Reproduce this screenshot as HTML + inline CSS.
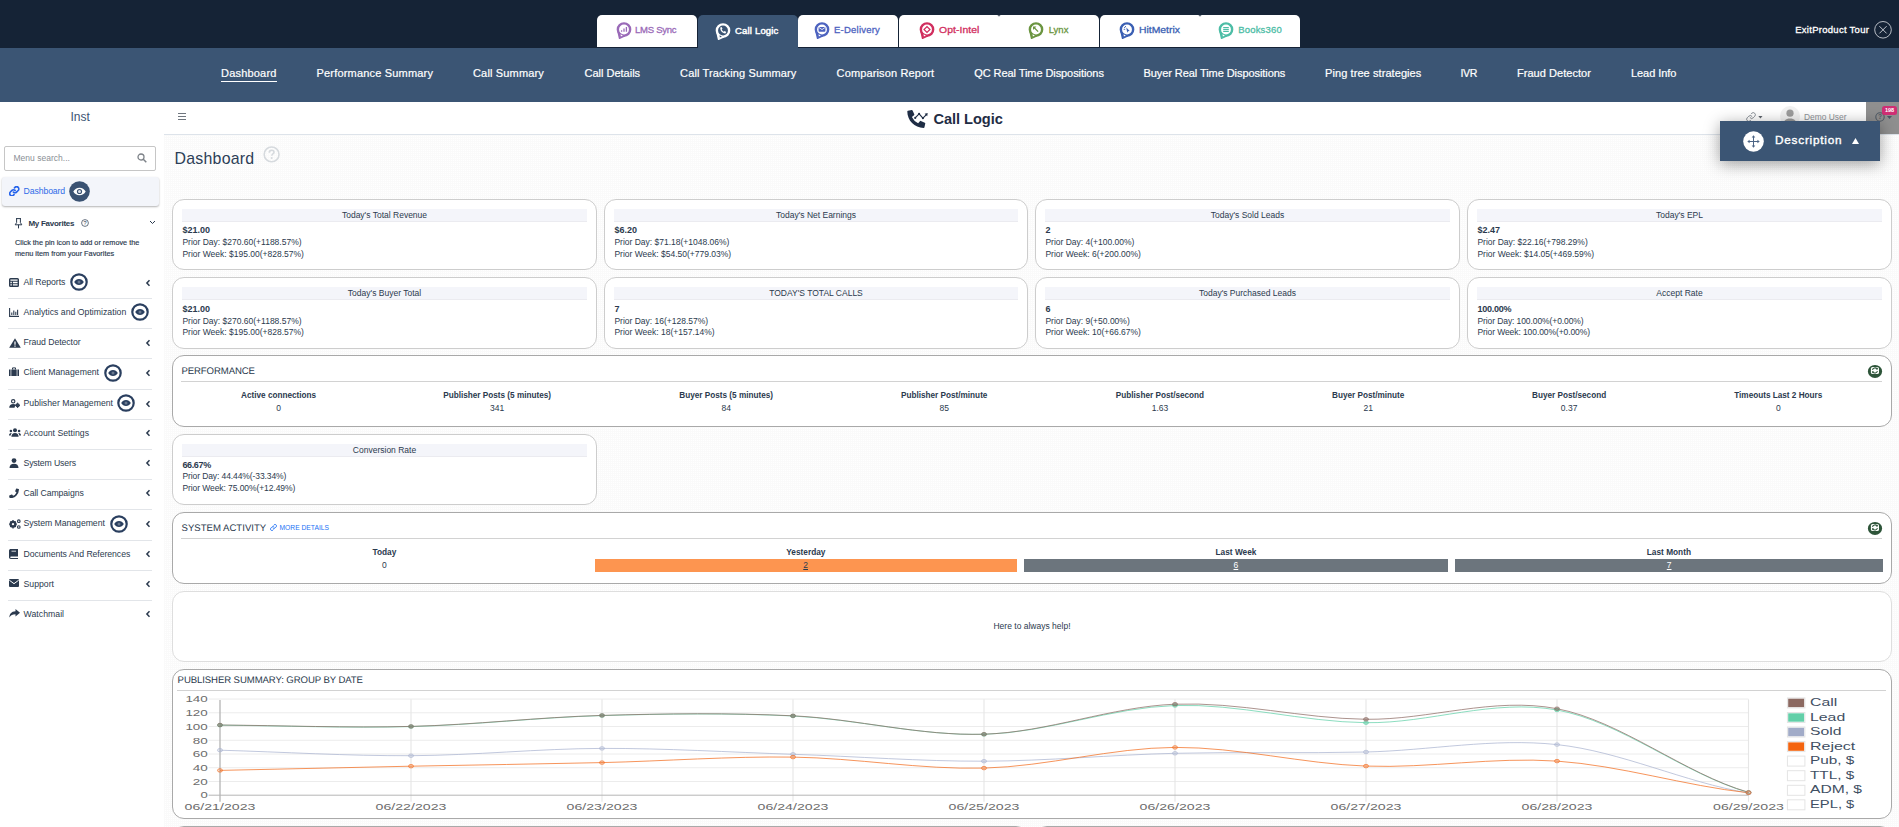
<!DOCTYPE html>
<html lang="en">
<head>
<meta charset="utf-8">
<title>Call Logic - Dashboard</title>
<style>
*{box-sizing:border-box;margin:0;padding:0}
html,body{width:1899px;height:827px;overflow:hidden;background-color:#fff;background-image:linear-gradient(90deg,#fafafa 1px,transparent 1px),linear-gradient(transparent 1px,#fafafa 1px);background-size:2px 2px;font-family:"Liberation Sans",sans-serif;color:#2b3a4e}
.abs{position:absolute}
.abs svg,svg.abs{display:block}
.t{position:absolute;white-space:nowrap;line-height:1}
.card{position:absolute;background:#fff;border:1px solid #cdcdcd;border-radius:12px}
#top{position:absolute;left:0;top:0;width:1899px;height:48px;background:#152336}
#nav{position:absolute;left:0;top:48px;width:1899px;height:54px;background:#3b5574}
</style>
</head>
<body>
<div id="top"></div>
<div id="nav"></div>
<!-- top bar -->
<div class="abs" style="left:597px;top:15px;width:100.3px;height:32px;background:#fff;border-radius:5px 5px 0 0"></div>
<div class="abs" style="left:613.5px;top:21.0px"><svg width="20" height="22" viewBox="0 0 20 22"><path d="M4.200 11.500L5.500 17.300 10.800 14.800z" fill="#9a6ab8" stroke="#9a6ab8" stroke-width="1.400" stroke-linejoin="round"/><circle cx="10" cy="8.500" r="6.150" fill="#fff" stroke="#9a6ab8" stroke-width="2.400"/><path d="M6.500 13.200L6.900 15.500 8.900 14.400z" fill="#fff"/><path d="M7.600 10.800V9.300M10 10.800V7.600M12.400 10.800V6" stroke="#9a6ab8" stroke-width="1.300" fill="none"/></svg></div>
<div class="t" style="font-size:9.5px;color:#9a6ab8;top:25.00px;-webkit-text-stroke:0.3px;left:635.00px;letter-spacing:-0.250px;">LMS Sync</div>
<div class="abs" style="left:697.5px;top:15px;width:100.2px;height:33px;background:#3b5574;border-radius:5px 5px 0 0"></div>
<div class="abs" style="left:713.4px;top:21.5px"><svg width="20" height="22" viewBox="0 0 20 22"><path d="M4.200 11.500L5.500 17.300 10.800 14.800z" fill="#ffffff" stroke="#ffffff" stroke-width="1.400" stroke-linejoin="round"/><circle cx="10" cy="8.500" r="6.150" fill="#3b5574" stroke="#ffffff" stroke-width="2.400"/><path d="M6.500 13.200L6.900 15.500 8.900 14.400z" fill="#3b5574"/><path d="M7.300 5.500c-.3 3 1.900 5.700 5 6l1-1.400-1.700-1.100-.8.700c-1-.5-1.700-1.300-2.100-2.300l.8-.6-.9-1.800z" fill="#fff"/></svg></div>
<div class="t" style="font-size:9.5px;color:#ffffff;top:26.00px;-webkit-text-stroke:0.45px;left:735.10px;letter-spacing:0.168px;">Call Logic</div>
<div class="abs" style="left:797.7px;top:15px;width:100.3px;height:32px;background:#fff;border-radius:5px 5px 0 0"></div>
<div class="abs" style="left:812.4px;top:21.2px"><svg width="20" height="22" viewBox="0 0 20 22"><path d="M4.200 11.500L5.500 17.300 10.800 14.800z" fill="#4d63bf" stroke="#4d63bf" stroke-width="1.400" stroke-linejoin="round"/><circle cx="10" cy="8.500" r="6.150" fill="#fff" stroke="#4d63bf" stroke-width="2.400"/><path d="M6.500 13.200L6.900 15.500 8.900 14.400z" fill="#fff"/><rect x="6.600" y="6" width="6.800" height="4.800" rx=".8" fill="#4d63bf"/><path d="M7 6.500l3 2.100 3-2.100" stroke="#fff" stroke-width=".8" fill="none"/></svg></div>
<div class="t" style="font-size:9.5px;color:#4d63bf;top:25.00px;-webkit-text-stroke:0.3px;left:834.00px;letter-spacing:0.229px;">E-Delivery</div>
<div class="abs" style="left:898.9px;top:15px;width:100.3px;height:32px;background:#fff;border-radius:5px 2px 0 0"></div>
<div class="abs" style="left:916.5px;top:21.2px"><svg width="20" height="22" viewBox="0 0 20 22"><path d="M4.200 11.500L5.500 17.300 10.800 14.800z" fill="#d12e5e" stroke="#d12e5e" stroke-width="1.400" stroke-linejoin="round"/><circle cx="10" cy="8.500" r="6.150" fill="#fff" stroke="#d12e5e" stroke-width="2.400"/><path d="M6.500 13.200L6.900 15.500 8.900 14.400z" fill="#fff"/><rect x="7.900" y="6.400" width="4.200" height="4.200" transform="rotate(45 10 8.500)" fill="none" stroke="#d12e5e" stroke-width="1.200"/></svg></div>
<div class="t" style="font-size:9.5px;color:#d12e5e;top:25.00px;-webkit-text-stroke:0.3px;left:938.50px;transform:scaleX(1.0900);transform-origin:0 0;letter-spacing:0.080px;">Opt-Intel</div>
<div class="abs" style="left:999px;top:15px;width:100px;height:32px;background:#fff;border-radius:2px 5px 0 0"></div>
<div class="abs" style="left:1026.3px;top:21.2px"><svg width="20" height="22" viewBox="0 0 20 22"><path d="M4.200 11.500L5.500 17.300 10.800 14.800z" fill="#6b9541" stroke="#6b9541" stroke-width="1.400" stroke-linejoin="round"/><circle cx="10" cy="8.500" r="6.150" fill="#fff" stroke="#6b9541" stroke-width="2.400"/><path d="M6.500 13.200L6.900 15.500 8.900 14.400z" fill="#fff"/><path d="M7.800 6.300l4.300 4.300" stroke="#6b9541" stroke-width="1.300" fill="none"/><path d="M7 5.500h3.400L7 8.900z" fill="#6b9541"/></svg></div>
<div class="t" style="font-size:9.5px;color:#6b9541;top:25.00px;-webkit-text-stroke:0.3px;left:1048.70px;letter-spacing:-0.005px;">Lynx</div>
<div class="abs" style="left:1100px;top:15px;width:100px;height:32px;background:#fff;border-radius:5px 2px 0 0"></div>
<div class="abs" style="left:1117.3px;top:21.2px"><svg width="20" height="22" viewBox="0 0 20 22"><path d="M4.200 11.500L5.500 17.300 10.800 14.800z" fill="#3a5fb3" stroke="#3a5fb3" stroke-width="1.400" stroke-linejoin="round"/><circle cx="10" cy="8.500" r="6.150" fill="#fff" stroke="#3a5fb3" stroke-width="2.400"/><path d="M6.500 13.200L6.900 15.500 8.900 14.400z" fill="#fff"/><path d="M9.300 6.400l3.400 3.700-1.700.1-.8 1.500z" fill="#3a5fb3"/><path d="M6.700 8.300h1.500M8.500 5v1.200M7 6l.9.900" stroke="#3a5fb3" stroke-width=".9"/></svg></div>
<div class="t" style="font-size:9.5px;color:#3a5fb3;top:25.00px;-webkit-text-stroke:0.3px;left:1139.00px;transform:scaleX(1.0900);transform-origin:0 0;letter-spacing:0.014px;">HitMetrix</div>
<div class="abs" style="left:1200px;top:15px;width:100.1px;height:32px;background:#fff;border-radius:2px 5px 0 0"></div>
<div class="abs" style="left:1216.3px;top:21.2px"><svg width="20" height="22" viewBox="0 0 20 22"><path d="M4.200 11.500L5.500 17.300 10.800 14.800z" fill="#4dbda6" stroke="#4dbda6" stroke-width="1.400" stroke-linejoin="round"/><circle cx="10" cy="8.500" r="6.150" fill="#fff" stroke="#4dbda6" stroke-width="2.400"/><path d="M6.500 13.200L6.900 15.500 8.900 14.400z" fill="#fff"/><path d="M7.200 6.700h5.600M7.200 8.500h5.600M7.200 10.300h5.600" stroke="#4dbda6" stroke-width="1.200" fill="none"/></svg></div>
<div class="t" style="font-size:9.5px;color:#4dbda6;top:25.00px;-webkit-text-stroke:0.3px;left:1238.20px;letter-spacing:0.179px;">Books360</div>
<div class="t" style="font-size:9.5px;color:#fff;top:25.00px;-webkit-text-stroke:0.3px;left:1795.20px;letter-spacing:0.279px;">ExitProduct Tour</div>
<svg class="abs" style="left:1873px;top:20px" width="20" height="20" viewBox="0 0 20 20"><circle cx="10" cy="9.800" r="8.300" fill="none" stroke="#d3d7dd" stroke-width=".85"/><path d="M6.400 6.200l7.200 7.200M13.600 6.200l-7.200 7.200" stroke="#d3d7dd" stroke-width=".9"/></svg>
<!-- nav -->
<div class="t" style="font-size:11px;color:#fff;top:68.00px;-webkit-text-stroke:0.2px;left:221.00px;letter-spacing:0.197px;">Dashboard</div>
<div class="t" style="font-size:11px;color:#fff;top:68.00px;-webkit-text-stroke:0.2px;left:316.50px;letter-spacing:0.185px;">Performance Summary</div>
<div class="t" style="font-size:11px;color:#fff;top:68.00px;-webkit-text-stroke:0.2px;left:473.00px;letter-spacing:0.160px;">Call Summary</div>
<div class="t" style="font-size:11px;color:#fff;top:68.00px;-webkit-text-stroke:0.2px;left:584.50px;letter-spacing:-0.003px;">Call Details</div>
<div class="t" style="font-size:11px;color:#fff;top:68.00px;-webkit-text-stroke:0.2px;left:680.10px;letter-spacing:0.124px;">Call Tracking Summary</div>
<div class="t" style="font-size:11px;color:#fff;top:68.00px;-webkit-text-stroke:0.2px;left:836.60px;letter-spacing:0.131px;">Comparison Report</div>
<div class="t" style="font-size:11px;color:#fff;top:68.00px;-webkit-text-stroke:0.2px;left:974.30px;letter-spacing:-0.077px;">QC Real Time Dispositions</div>
<div class="t" style="font-size:11px;color:#fff;top:68.00px;-webkit-text-stroke:0.2px;left:1143.50px;letter-spacing:-0.070px;">Buyer Real Time Dispositions</div>
<div class="t" style="font-size:11px;color:#fff;top:68.00px;-webkit-text-stroke:0.2px;left:1325.10px;letter-spacing:0.076px;">Ping tree strategies</div>
<div class="t" style="font-size:10.6px;color:#fff;top:68.00px;-webkit-text-stroke:0.2px;left:1460.50px;letter-spacing:-0.357px;">IVR</div>
<div class="t" style="font-size:11px;color:#fff;top:68.00px;-webkit-text-stroke:0.2px;left:1516.90px;letter-spacing:0.052px;">Fraud Detector</div>
<div class="t" style="font-size:11px;color:#fff;top:68.00px;-webkit-text-stroke:0.2px;left:1631.00px;letter-spacing:-0.064px;">Lead Info</div>
<div class="abs" style="left:221px;top:80.700px;width:55.600px;height:1px;background:#fff"></div>
<!-- sidebar -->
<div class="abs" style="left:0;top:102px;width:164px;height:725px;background:#fff"></div>
<div class="t" style="font-size:12px;color:#3b5373;top:111.00px;left:70.50px;letter-spacing:0.039px;">Inst</div>
<div class="abs" style="left:4px;top:146px;width:152px;height:25px;border:1px solid #c6c6c6;border-radius:2px;background:#fff"></div>
<div class="t" style="font-size:8.5px;color:#8a8f96;top:154.00px;left:13.50px;letter-spacing:0.019px;">Menu search...</div>
<svg class="abs" style="left:137px;top:153px" width="10" height="10" viewBox="0 0 10 10"><circle cx="4" cy="4" r="3" fill="none" stroke="#7d8288" stroke-width="1.300"/><path d="M6.300 6.300l3 3" stroke="#7d8288" stroke-width="1.500"/></svg>
<div class="abs" style="left:1.600px;top:177px;width:157.700px;height:28.800px;background:#f3f5fa;border-radius:3px;box-shadow:0 1px 2px rgba(0,0,0,.3)"></div>
<svg class="abs" style="left:9px;top:185.800px" width="10.500" height="10.500" viewBox="0 0 11 11"><path d="M4.600 6.400a2.300 2.300 0 0 0 3.300 0l1.700-1.700a2.300 2.300 0 0 0-3.300-3.300l-.6.600M6.400 4.600a2.300 2.300 0 0 0-3.300 0L1.400 6.300a2.300 2.300 0 0 0 3.300 3.300l.6-.6" fill="none" stroke="#2563eb" stroke-width="1.7" stroke-linecap="round"/></svg>
<div class="t" style="font-size:8.7px;color:#2f6be8;top:187.00px;left:23.60px;letter-spacing:-0.113px;">Dashboard</div>
<div class="abs" style="left:68.600px;top:180.900px"><svg width="21" height="21" viewBox="0 0 21 21"><circle cx="10.500" cy="10.500" r="10.300" fill="#3a5272"/><path d="M4.300 10.500c1.400-2.500 3.500-3.800 6.200-3.800s4.800 1.300 6.200 3.800c-1.400 2.500-3.500 3.800-6.200 3.800s-4.800-1.300-6.200-3.800z" fill="#fff"/><circle cx="10.500" cy="10.500" r="2.600" fill="#3a5272"/><circle cx="10.500" cy="10.500" r="1.500" fill="#dfe4ec"/></svg></div>
<svg class="abs" style="left:13.800px;top:217.500px" width="9" height="11" viewBox="0 0 9 11"><path d="M2 .6h5M2.600.6v4L1.200 6.800h6.600L6.400 4.600v-4M4.500 6.800v3.600" fill="none" stroke="#2b3a4e" stroke-width="1"/></svg>
<div class="t" style="font-size:8px;color:#2b3a4e;top:220.00px;font-weight:bold;left:28.40px;letter-spacing:-0.259px;">My Favorites</div>
<svg class="abs" style="left:81px;top:218.500px" width="8" height="8" viewBox="0 0 8 8"><circle cx="4" cy="4" r="3.400" fill="none" stroke="#2b3a4e" stroke-width=".7"/><text x="4" y="6" font-size="5.500" text-anchor="middle" fill="#2b3a4e" font-family="Liberation Sans">?</text></svg>
<svg class="abs" style="left:149px;top:220px" width="7" height="5" viewBox="0 0 7 5"><path d="M1 1l2.500 2.500L6 1" fill="none" stroke="#2b3a4e" stroke-width="1"/></svg>
<div class="t" style="font-size:6.8px;color:#2b3a4e;top:240.00px;-webkit-text-stroke:0.15px;left:14.80px;transform:scaleX(1.0716);transform-origin:0 0;letter-spacing:-0.000px;">Click the pin icon to add or remove the</div>
<div class="t" style="font-size:6.8px;color:#2b3a4e;top:251.00px;-webkit-text-stroke:0.15px;left:14.80px;transform:scaleX(1.0763);transform-origin:0 0;letter-spacing:0.000px;">menu item from your Favorites</div>
<div class="abs" style="left:8.500px;top:277.5px"><svg width="10" height="9" viewBox="0 0 10 9"><rect x=".7" y=".7" width="8.600" height="7.600" rx=".8" fill="none" stroke="#2b3a4e" stroke-width="1.400"/><path d="M1 3.200h8M1 5.700h8M3.400 3v5.400" stroke="#2b3a4e" stroke-width="1.100"/></svg></div>
<div class="t" style="font-size:8.7px;color:#2b3a4e;top:278.00px;left:23.50px;letter-spacing:-0.064px;">All Reports</div>
<svg class="abs" style="left:144.500px;top:279.3px" width="6" height="8" viewBox="0 0 6 8"><path d="M4.500 1.300L1.900 4l2.600 2.700" fill="none" stroke="#2b3a4e" stroke-width="1.500"/></svg>
<div class="abs" style="left:70.0px;top:273.2px"><svg width="18" height="18" viewBox="0 0 18 18"><circle cx="9" cy="9" r="7.700" fill="#fff" stroke="#2a3f5f" stroke-width="2.200"/><path d="M4.200 9c1.100-1.900 2.700-2.900 4.800-2.900s3.700 1 4.800 2.900c-1.100 1.900-2.700 2.900-4.800 2.900s-3.700-1-4.800-2.900z" fill="#2a3f5f"/><circle cx="9" cy="9" r="1.500" fill="#fff" opacity=".3"/></svg></div>
<div class="abs" style="left:8px;top:298.0px;width:144px;height:1px;background:#e2e5e9"></div>
<div class="abs" style="left:8.500px;top:307.5px"><svg width="10" height="9" viewBox="0 0 10 9"><path d="M.6 0v8.400h9.400" fill="none" stroke="#2b3a4e" stroke-width="1.100"/><path d="M2.800 7V4.500M4.800 7V2.500M6.800 7V3.800M8.600 7V1.800" stroke="#2b3a4e" stroke-width="1.100"/></svg></div>
<div class="t" style="font-size:8.7px;color:#2b3a4e;top:308.00px;left:23.50px;letter-spacing:0.016px;">Analytics and Optimization</div>
<div class="abs" style="left:131.0px;top:303.2px"><svg width="18" height="18" viewBox="0 0 18 18"><circle cx="9" cy="9" r="7.700" fill="#fff" stroke="#2a3f5f" stroke-width="2.200"/><path d="M4.200 9c1.100-1.900 2.700-2.900 4.800-2.900s3.700 1 4.800 2.900c-1.100 1.900-2.700 2.900-4.800 2.900s-3.700-1-4.800-2.900z" fill="#2a3f5f"/><circle cx="9" cy="9" r="1.500" fill="#fff" opacity=".3"/></svg></div>
<div class="abs" style="left:8px;top:327.8px;width:144px;height:1px;background:#e2e5e9"></div>
<div class="abs" style="left:8.500px;top:337.6px"><svg width="12" height="10" viewBox="0 0 12 10"><path d="M6 .2L11.800 9.800H.2z" fill="#2b3a4e"/><path d="M6 3.500v3.200M6 7.600v1.100" stroke="#fff" stroke-width="1.200"/></svg></div>
<div class="t" style="font-size:8.7px;color:#2b3a4e;top:338.00px;left:23.50px;letter-spacing:-0.068px;">Fraud Detector</div>
<svg class="abs" style="left:144.500px;top:338.6px" width="6" height="8" viewBox="0 0 6 8"><path d="M4.500 1.300L1.900 4l2.600 2.700" fill="none" stroke="#2b3a4e" stroke-width="1.500"/></svg>
<div class="abs" style="left:8px;top:357.9px;width:144px;height:1px;background:#e2e5e9"></div>
<div class="abs" style="left:8.500px;top:367.4px"><svg width="10" height="9" viewBox="0 0 10 9"><path d="M0 2.500h1.600v6.500H0zM8.400 2.500H10v6.500H8.400zM2.300 2.500h5.400v6.500H2.300z" fill="#2b3a4e"/><path d="M3.500 2.500V.9h3v1.600" fill="none" stroke="#2b3a4e" stroke-width="1"/></svg></div>
<div class="t" style="font-size:8.7px;color:#2b3a4e;top:368.00px;left:23.50px;letter-spacing:0.009px;">Client Management</div>
<svg class="abs" style="left:144.500px;top:369.2px" width="6" height="8" viewBox="0 0 6 8"><path d="M4.500 1.300L1.900 4l2.600 2.700" fill="none" stroke="#2b3a4e" stroke-width="1.500"/></svg>
<div class="abs" style="left:103.5px;top:363.5px"><svg width="18" height="18" viewBox="0 0 18 18"><circle cx="9" cy="9" r="7.700" fill="#fff" stroke="#2a3f5f" stroke-width="2.200"/><path d="M4.200 9c1.100-1.900 2.700-2.900 4.800-2.900s3.700 1 4.800 2.900c-1.100 1.900-2.700 2.900-4.800 2.900s-3.700-1-4.800-2.900z" fill="#2a3f5f"/><circle cx="9" cy="9" r="1.500" fill="#fff" opacity=".3"/></svg></div>
<div class="abs" style="left:8px;top:389.0px;width:144px;height:1px;background:#e2e5e9"></div>
<div class="abs" style="left:8.500px;top:398.5px"><svg width="11" height="9" viewBox="0 0 11 9"><circle cx="4.200" cy="2.300" r="1.700" fill="none" stroke="#2b3a4e" stroke-width="1.100"/><path d="M.2 8.800c0-2.500 1.500-3.900 4-3.900 1 0 1.800.2 2.400.7L5.500 8.800z" fill="#2b3a4e"/><circle cx="8.600" cy="6.300" r="2.100" fill="#2b3a4e"/><circle cx="8.600" cy="6.300" r=".8" fill="#fff"/><path d="M8.600 3.600v5.400M5.900 6.300h5.400" stroke="#2b3a4e" stroke-width=".9"/></svg></div>
<div class="t" style="font-size:8.7px;color:#2b3a4e;top:399.00px;left:23.50px;letter-spacing:0.008px;">Publisher Management</div>
<svg class="abs" style="left:144.500px;top:400.3px" width="6" height="8" viewBox="0 0 6 8"><path d="M4.500 1.300L1.900 4l2.600 2.700" fill="none" stroke="#2b3a4e" stroke-width="1.500"/></svg>
<div class="abs" style="left:117.0px;top:394.0px"><svg width="18" height="18" viewBox="0 0 18 18"><circle cx="9" cy="9" r="7.700" fill="#fff" stroke="#2a3f5f" stroke-width="2.200"/><path d="M4.200 9c1.100-1.900 2.700-2.900 4.800-2.900s3.700 1 4.800 2.900c-1.100 1.900-2.700 2.900-4.800 2.900s-3.700-1-4.800-2.900z" fill="#2a3f5f"/><circle cx="9" cy="9" r="1.500" fill="#fff" opacity=".3"/></svg></div>
<div class="abs" style="left:8px;top:418.8px;width:144px;height:1px;background:#e2e5e9"></div>
<div class="abs" style="left:8.500px;top:428.3px"><svg width="12" height="9" viewBox="0 0 12 9"><circle cx="6" cy="2.300" r="2" fill="#2b3a4e"/><path d="M2.400 8.800c0-2.300 1.400-3.700 3.600-3.700s3.600 1.400 3.600 3.700z" fill="#2b3a4e"/><circle cx="1.900" cy="3" r="1.300" fill="#2b3a4e"/><circle cx="10.100" cy="3" r="1.300" fill="#2b3a4e"/><path d="M0 7.600c0-1.600.8-2.600 2.200-2.600l.5.100c-.6.700-.9 1.500-1 2.500zM12 7.600c0-1.600-.8-2.600-2.200-2.600l-.5.100c.6.700.9 1.500 1 2.500z" fill="#2b3a4e"/></svg></div>
<div class="t" style="font-size:8.7px;color:#2b3a4e;top:429.00px;left:23.50px;letter-spacing:0.019px;">Account Settings</div>
<svg class="abs" style="left:144.500px;top:429.3px" width="6" height="8" viewBox="0 0 6 8"><path d="M4.500 1.300L1.900 4l2.600 2.700" fill="none" stroke="#2b3a4e" stroke-width="1.500"/></svg>
<div class="abs" style="left:8px;top:449.1px;width:144px;height:1px;background:#e2e5e9"></div>
<div class="abs" style="left:8.500px;top:458.3px"><svg width="10" height="10" viewBox="0 0 10 10"><circle cx="5" cy="2.600" r="2.400" fill="#2b3a4e"/><path d="M.5 10c0-2.700 1.700-4.200 4.500-4.200s4.500 1.500 4.500 4.200z" fill="#2b3a4e"/></svg></div>
<div class="t" style="font-size:8.7px;color:#2b3a4e;top:459.00px;left:23.50px;letter-spacing:-0.132px;">System Users</div>
<svg class="abs" style="left:144.500px;top:459.3px" width="6" height="8" viewBox="0 0 6 8"><path d="M4.500 1.300L1.900 4l2.600 2.700" fill="none" stroke="#2b3a4e" stroke-width="1.500"/></svg>
<div class="abs" style="left:8px;top:479.0px;width:144px;height:1px;background:#e2e5e9"></div>
<div class="abs" style="left:8.500px;top:488.3px"><svg width="10" height="10" viewBox="0 0 10 10"><path d="M.4.900l2-.5a.5.500 0 0 1 .5.300l.9 2.200a.5.500 0 0 1-.1.500l-1.200 1a7.200 7.200 0 0 0 3.400 3.400l1-1.200a.5.500 0 0 1 .5-.1l2.200.9a.5.500 0 0 1 .3.500l-.5 2a.5.500 0 0 1-.5.400A9.100 9.100 0 0 1 0 1.400a.5.500 0 0 1 .4-.5z" fill="#2b3a4e" transform="translate(10,0) scale(-1,1)"/></svg></div>
<div class="t" style="font-size:8.7px;color:#2b3a4e;top:489.00px;left:23.50px;letter-spacing:-0.081px;">Call Campaigns</div>
<svg class="abs" style="left:144.500px;top:489.3px" width="6" height="8" viewBox="0 0 6 8"><path d="M4.500 1.300L1.900 4l2.600 2.700" fill="none" stroke="#2b3a4e" stroke-width="1.500"/></svg>
<div class="abs" style="left:8px;top:509.0px;width:144px;height:1px;background:#e2e5e9"></div>
<div class="abs" style="left:8.500px;top:518.6px"><svg width="12" height="10" viewBox="0 0 12 10"><circle cx="4" cy="5.200" r="2.500" fill="none" stroke="#2b3a4e" stroke-width="2"/><path d="M4 1v8.400M.2 5.200h7.600M1.300 2.500l5.400 5.400M6.700 2.500L1.300 7.900" stroke="#2b3a4e" stroke-width="1.300"/><circle cx="4" cy="5.200" r="1.100" fill="#fff"/><circle cx="9.800" cy="2.200" r="1.300" fill="none" stroke="#2b3a4e" stroke-width="1.100"/><circle cx="9.800" cy="8" r="1.300" fill="none" stroke="#2b3a4e" stroke-width="1.100"/></svg></div>
<div class="t" style="font-size:8.7px;color:#2b3a4e;top:519.00px;left:23.50px;letter-spacing:-0.047px;">System Management</div>
<svg class="abs" style="left:144.500px;top:520.4px" width="6" height="8" viewBox="0 0 6 8"><path d="M4.500 1.300L1.900 4l2.600 2.700" fill="none" stroke="#2b3a4e" stroke-width="1.500"/></svg>
<div class="abs" style="left:109.6px;top:515.0px"><svg width="18" height="18" viewBox="0 0 18 18"><circle cx="9" cy="9" r="7.700" fill="#fff" stroke="#2a3f5f" stroke-width="2.200"/><path d="M4.200 9c1.100-1.900 2.700-2.900 4.800-2.900s3.700 1 4.800 2.900c-1.100 1.900-2.700 2.900-4.800 2.900s-3.700-1-4.800-2.900z" fill="#2a3f5f"/><circle cx="9" cy="9" r="1.500" fill="#fff" opacity=".3"/></svg></div>
<div class="abs" style="left:8px;top:539.7px;width:144px;height:1px;background:#e2e5e9"></div>
<div class="abs" style="left:8.500px;top:549.3px"><svg width="9" height="10" viewBox="0 0 9 10"><path d="M1.800 0H9v7.600H2c-.5 0-.8.300-.8.700s.3.700.8.700h7V10H1.800C.8 10 0 9.300 0 8.300V1.700C0 .7.800 0 1.800 0z" fill="#2b3a4e"/><path d="M2.500 2.200h4.500" stroke="#fff" stroke-width=".8"/></svg></div>
<div class="t" style="font-size:8.7px;color:#2b3a4e;top:550.00px;left:23.50px;letter-spacing:-0.061px;">Documents And References</div>
<svg class="abs" style="left:144.500px;top:550.3px" width="6" height="8" viewBox="0 0 6 8"><path d="M4.500 1.300L1.900 4l2.600 2.700" fill="none" stroke="#2b3a4e" stroke-width="1.500"/></svg>
<div class="abs" style="left:8px;top:569.7px;width:144px;height:1px;background:#e2e5e9"></div>
<div class="abs" style="left:8.500px;top:579.3px"><svg width="10" height="8" viewBox="0 0 10 8"><rect width="10" height="8" rx="1" fill="#2b3a4e"/><path d="M.3 1.200l4.700 3.500 4.700-3.500" stroke="#fff" stroke-width="1" fill="none"/></svg></div>
<div class="t" style="font-size:8.7px;color:#2b3a4e;top:580.00px;left:23.50px;letter-spacing:0.009px;">Support</div>
<svg class="abs" style="left:144.500px;top:580.3px" width="6" height="8" viewBox="0 0 6 8"><path d="M4.500 1.300L1.900 4l2.600 2.700" fill="none" stroke="#2b3a4e" stroke-width="1.500"/></svg>
<div class="abs" style="left:8px;top:599.7px;width:144px;height:1px;background:#e2e5e9"></div>
<div class="abs" style="left:8.500px;top:609.3px"><svg width="11" height="9" viewBox="0 0 11 9"><path d="M6.500 0L11 3.700 6.500 7.400V5.200C3.500 5.200 1.700 6 .4 8.600.4 5 2.300 2.500 6.500 2.200z" fill="#2b3a4e"/></svg></div>
<div class="t" style="font-size:8.7px;color:#2b3a4e;top:610.00px;left:23.50px;letter-spacing:0.041px;">Watchmail</div>
<svg class="abs" style="left:144.500px;top:610.3px" width="6" height="8" viewBox="0 0 6 8"><path d="M4.500 1.300L1.900 4l2.600 2.700" fill="none" stroke="#2b3a4e" stroke-width="1.500"/></svg>
<!-- header -->
<div class="abs" style="left:164px;top:102px;width:1735px;height:33px;background:#fff;border-bottom:1px solid #dde3ea"></div>
<div class="abs" style="left:178px;top:113px;width:8px;height:1px;background:#6f767e"></div>
<div class="abs" style="left:178px;top:116px;width:8px;height:1px;background:#6f767e"></div>
<div class="abs" style="left:178px;top:119px;width:8px;height:1px;background:#6f767e"></div>
<svg class="abs" style="left:907px;top:109px" width="23" height="20" viewBox="0 0 23 20"><g transform="translate(.3,.9) scale(.0352)"><path d="M497.390 361.800l-112-48a24 24 0 0 0-28 6.900l-49.600 60.600A370.660 370.660 0 0 1 130.600 204.110l60.600-49.600a23.940 23.940 0 0 0 6.900-28l-48-112A24.160 24.160 0 0 0 122.600.610l-104 24A24 24 0 0 0 0 48c0 256.500 207.900 464 464 464a24 24 0 0 0 23.400-18.600l24-104a24.290 24.290 0 0 0-14.010-27.600z" fill="#1f2d45"/></g><path d="M8.200 8.900L12.100 4.800 15.900 9.200 19.600 5.300" fill="none" stroke="#1f2d45" stroke-width="1.100"/><circle cx="8.200" cy="8.900" r="1.050" fill="#1f2d45"/><circle cx="12.100" cy="4.800" r="1.050" fill="#1f2d45"/><circle cx="15.900" cy="9.200" r="1.050" fill="#1f2d45"/><path d="M20.700 4.100l-.5 3.100-2.600-2.500z" fill="#1f2d45"/></svg>
<div class="t" style="font-size:14.6px;color:#1f2d45;top:112.00px;font-weight:bold;left:933.60px;letter-spacing:-0.063px;">Call Logic</div>
<svg class="abs" style="left:1746px;top:111.500px" width="10" height="10" viewBox="0 0 11 11"><path d="M4.600 6.400a2.300 2.300 0 0 0 3.300 0l1.700-1.700a2.300 2.300 0 0 0-3.300-3.300l-.6.600M6.400 4.600a2.300 2.300 0 0 0-3.300 0L1.400 6.300a2.300 2.300 0 0 0 3.300 3.300l.6-.6" fill="none" stroke="#7d838b" stroke-width="1" stroke-linecap="round"/></svg>
<svg class="abs" style="left:1758px;top:116px" width="5" height="3" viewBox="0 0 5 3"><path d="M.3 0h4.200L2.400 2.400z" fill="#5f656d"/></svg>
<svg class="abs" style="left:1779.700px;top:106px" width="20" height="20" viewBox="0 0 20 20"><defs><clipPath id="av"><circle cx="10" cy="10" r="10"/></clipPath></defs><circle cx="10" cy="10" r="10" fill="#f1f1f1"/><g clip-path="url(#av)"><circle cx="10" cy="7.200" r="3.600" fill="#9b9b9b"/><path d="M2.500 21c0-5.500 3-8.500 7.500-8.500s7.500 3 7.500 8.500z" fill="#9b9b9b"/></g></svg>
<div class="t" style="font-size:9.8px;color:#8e9298;top:112.00px;left:1803.50px;transform:scaleX(0.8578);transform-origin:0 0;">Demo User</div>
<div class="abs" style="left:1866px;top:102px;width:33px;height:32px;background:#8f8f8f"></div>
<svg class="abs" style="left:1875px;top:112px" width="10" height="10" viewBox="0 0 10 10"><circle cx="5" cy="5" r="4.200" fill="none" stroke="#4f5964" stroke-width="1.100"/><text x="5" y="7.400" font-size="6.500" font-weight="bold" text-anchor="middle" fill="#4f5964" font-family="Liberation Sans">?</text></svg>
<svg class="abs" style="left:1887px;top:116px" width="5" height="3" viewBox="0 0 5 3"><path d="M0 0h5L2.500 3z" fill="#4b5563"/></svg>
<div class="abs" style="left:1882px;top:106px;width:15px;height:8.500px;background:#cf2f74;border-radius:2.500px;color:#fff;font-size:5.500px;font-weight:bold;line-height:8.500px;text-align:center">198</div>
<!-- main -->
<div class="t" style="font-size:15.9px;color:#2c3e57;top:151.00px;left:174.60px;letter-spacing:0.228px;">Dashboard</div>
<svg class="abs" style="left:262px;top:145px" width="18" height="18" viewBox="-0.6 -0.4 18 18"><circle cx="9" cy="9" r="7.400" fill="none" stroke="#d6dade" stroke-width="1.600"/><path d="M6.700 7.300c0-1.500 1-2.400 2.400-2.400s2.300.9 2.300 2c0 1.700-2.200 1.700-2.200 3.500" fill="none" stroke="#d6dade" stroke-width="1.600"/><circle cx="9.100" cy="12.700" r="1" fill="#d6dade"/></svg>
<div class="card" style="left:172.0px;top:199.0px;width:425.0px;height:71.0px;border-color:#cdcdcd"></div>
<div class="abs" style="left:182px;top:209px;width:405px;height:13px;background:#f4f5fa;border-bottom:1px solid #ebebf0"></div>
<div class="t" style="font-size:8.5px;color:#2b3a4e;top:211.00px;left:234.50px;width:300px;text-align:center;">Today's Total Revenue</div>
<div class="t" style="font-size:9px;color:#2b3a4e;top:226.00px;font-weight:bold;left:182.40px;">$21.00</div>
<div class="t" style="font-size:8.5px;color:#2b3a4e;top:238.00px;left:182.40px;">Prior Day: $270.60(+1188.57%)</div>
<div class="t" style="font-size:8.5px;color:#2b3a4e;top:250.00px;left:182.40px;">Prior Week: $195.00(+828.57%)</div>
<div class="card" style="left:604.0px;top:199.0px;width:424.0px;height:71.0px;border-color:#cdcdcd"></div>
<div class="abs" style="left:614px;top:209px;width:404px;height:13px;background:#f4f5fa;border-bottom:1px solid #ebebf0"></div>
<div class="t" style="font-size:8.5px;color:#2b3a4e;top:211.00px;left:666.00px;width:300px;text-align:center;">Today's Net Earnings</div>
<div class="t" style="font-size:9px;color:#2b3a4e;top:226.00px;font-weight:bold;left:614.40px;">$6.20</div>
<div class="t" style="font-size:8.5px;color:#2b3a4e;top:238.00px;left:614.40px;">Prior Day: $71.18(+1048.06%)</div>
<div class="t" style="font-size:8.5px;color:#2b3a4e;top:250.00px;left:614.40px;">Prior Week: $54.50(+779.03%)</div>
<div class="card" style="left:1035.0px;top:199.0px;width:425.0px;height:71.0px;border-color:#cdcdcd"></div>
<div class="abs" style="left:1045px;top:209px;width:405px;height:13px;background:#f4f5fa;border-bottom:1px solid #ebebf0"></div>
<div class="t" style="font-size:8.5px;color:#2b3a4e;top:211.00px;left:1097.50px;width:300px;text-align:center;">Today's Sold Leads</div>
<div class="t" style="font-size:9px;color:#2b3a4e;top:226.00px;font-weight:bold;left:1045.40px;">2</div>
<div class="t" style="font-size:8.5px;color:#2b3a4e;top:238.00px;left:1045.40px;">Prior Day: 4(+100.00%)</div>
<div class="t" style="font-size:8.5px;color:#2b3a4e;top:250.00px;left:1045.40px;">Prior Week: 6(+200.00%)</div>
<div class="card" style="left:1467.0px;top:199.0px;width:425.0px;height:71.0px;border-color:#cdcdcd"></div>
<div class="abs" style="left:1477px;top:209px;width:405px;height:13px;background:#f4f5fa;border-bottom:1px solid #ebebf0"></div>
<div class="t" style="font-size:8.5px;color:#2b3a4e;top:211.00px;left:1529.50px;width:300px;text-align:center;">Today's EPL</div>
<div class="t" style="font-size:9px;color:#2b3a4e;top:226.00px;font-weight:bold;left:1477.40px;">$2.47</div>
<div class="t" style="font-size:8.5px;color:#2b3a4e;top:238.00px;left:1477.40px;">Prior Day: $22.16(+798.29%)</div>
<div class="t" style="font-size:8.5px;color:#2b3a4e;top:250.00px;left:1477.40px;">Prior Week: $14.05(+469.59%)</div>
<div class="card" style="left:172.0px;top:277.0px;width:425.0px;height:72.0px;border-color:#cdcdcd"></div>
<div class="abs" style="left:182px;top:287px;width:405px;height:13px;background:#f4f5fa;border-bottom:1px solid #ebebf0"></div>
<div class="t" style="font-size:8.5px;color:#2b3a4e;top:289.00px;left:234.50px;width:300px;text-align:center;">Today's Buyer Total</div>
<div class="t" style="font-size:9px;color:#2b3a4e;top:305.00px;font-weight:bold;left:182.40px;">$21.00</div>
<div class="t" style="font-size:8.5px;color:#2b3a4e;top:317.00px;left:182.40px;">Prior Day: $270.60(+1188.57%)</div>
<div class="t" style="font-size:8.5px;color:#2b3a4e;top:328.00px;left:182.40px;">Prior Week: $195.00(+828.57%)</div>
<div class="card" style="left:604.0px;top:277.0px;width:424.0px;height:72.0px;border-color:#cdcdcd"></div>
<div class="abs" style="left:614px;top:287px;width:404px;height:13px;background:#f4f5fa;border-bottom:1px solid #ebebf0"></div>
<div class="t" style="font-size:8.5px;color:#2b3a4e;top:289.00px;left:666.00px;width:300px;text-align:center;">TODAY'S TOTAL CALLS</div>
<div class="t" style="font-size:9px;color:#2b3a4e;top:305.00px;font-weight:bold;left:614.40px;">7</div>
<div class="t" style="font-size:8.5px;color:#2b3a4e;top:317.00px;left:614.40px;">Prior Day: 16(+128.57%)</div>
<div class="t" style="font-size:8.5px;color:#2b3a4e;top:328.00px;left:614.40px;">Prior Week: 18(+157.14%)</div>
<div class="card" style="left:1035.0px;top:277.0px;width:425.0px;height:72.0px;border-color:#cdcdcd"></div>
<div class="abs" style="left:1045px;top:287px;width:405px;height:13px;background:#f4f5fa;border-bottom:1px solid #ebebf0"></div>
<div class="t" style="font-size:8.5px;color:#2b3a4e;top:289.00px;left:1097.50px;width:300px;text-align:center;">Today's Purchased Leads</div>
<div class="t" style="font-size:9px;color:#2b3a4e;top:305.00px;font-weight:bold;left:1045.40px;">6</div>
<div class="t" style="font-size:8.5px;color:#2b3a4e;top:317.00px;left:1045.40px;">Prior Day: 9(+50.00%)</div>
<div class="t" style="font-size:8.5px;color:#2b3a4e;top:328.00px;left:1045.40px;">Prior Week: 10(+66.67%)</div>
<div class="card" style="left:1467.0px;top:277.0px;width:425.0px;height:72.0px;border-color:#cdcdcd"></div>
<div class="abs" style="left:1477px;top:287px;width:405px;height:13px;background:#f4f5fa;border-bottom:1px solid #ebebf0"></div>
<div class="t" style="font-size:8.5px;color:#2b3a4e;top:289.00px;left:1529.50px;width:300px;text-align:center;">Accept Rate</div>
<div class="t" style="font-size:9px;color:#2b3a4e;top:305.00px;font-weight:bold;left:1477.40px;letter-spacing:-0.233px;">100.00%</div>
<div class="t" style="font-size:8.5px;color:#2b3a4e;top:317.00px;left:1477.40px;letter-spacing:-0.086px;">Prior Day: 100.00%(+0.00%)</div>
<div class="t" style="font-size:8.5px;color:#2b3a4e;top:328.00px;left:1477.40px;letter-spacing:-0.085px;">Prior Week: 100.00%(+0.00%)</div>
<div class="card" style="left:172.0px;top:355.0px;width:1720.0px;height:72.0px;border-color:#a9a9a9"></div>
<div class="t" style="font-size:9.6px;color:#2b3a4e;top:367.17px;left:181.50px;text-rendering:geometricPrecision;letter-spacing:-0.120px;">PERFORMANCE</div>
<div class="abs" style="left:181px;top:381px;width:1701px;height:1px;background:#d2d2d2"></div>
<svg class="abs" style="left:1866.9px;top:363.0px" width="16" height="16" viewBox="0 0 16 16"><ellipse cx="8" cy="8.400" rx="7.100" ry="6.500" fill="#2d5439"/><rect x="3.900" y="3.900" width="8.100" height="7.100" rx="1.600" fill="#fbfdfb"/><path d="M5.500 6.900a2.600 2.400 0 0 1 4.600-1.100M10.400 8a2.600 2.400 0 0 1-4.600 1.100" fill="none" stroke="#2d5439" stroke-width="1.100"/><path d="M10.900 4.600v2h-2zM5 10.300v-2h2z" fill="#2d5439"/></svg>
<div class="t" style="font-size:8.2px;color:#2b3a4e;top:392.00px;font-weight:bold;left:128.60px;width:300px;text-align:center;">Active connections</div>
<div class="t" style="font-size:8.5px;color:#2b3a4e;top:404.00px;left:128.60px;width:300px;text-align:center;">0</div>
<div class="t" style="font-size:8.2px;color:#2b3a4e;top:392.00px;font-weight:bold;left:347.10px;width:300px;text-align:center;">Publisher Posts (5 minutes)</div>
<div class="t" style="font-size:8.5px;color:#2b3a4e;top:404.00px;left:347.10px;width:300px;text-align:center;">341</div>
<div class="t" style="font-size:8.2px;color:#2b3a4e;top:392.00px;font-weight:bold;left:576.20px;width:300px;text-align:center;">Buyer Posts (5 minutes)</div>
<div class="t" style="font-size:8.5px;color:#2b3a4e;top:404.00px;left:576.20px;width:300px;text-align:center;">84</div>
<div class="t" style="font-size:8.2px;color:#2b3a4e;top:392.00px;font-weight:bold;left:794.20px;width:300px;text-align:center;">Publisher Post/minute</div>
<div class="t" style="font-size:8.5px;color:#2b3a4e;top:404.00px;left:794.20px;width:300px;text-align:center;">85</div>
<div class="t" style="font-size:8.2px;color:#2b3a4e;top:392.00px;font-weight:bold;left:1010.00px;width:300px;text-align:center;">Publisher Post/second</div>
<div class="t" style="font-size:8.5px;color:#2b3a4e;top:404.00px;left:1010.00px;width:300px;text-align:center;">1.63</div>
<div class="t" style="font-size:8.2px;color:#2b3a4e;top:392.00px;font-weight:bold;left:1218.20px;width:300px;text-align:center;">Buyer Post/minute</div>
<div class="t" style="font-size:8.5px;color:#2b3a4e;top:404.00px;left:1218.20px;width:300px;text-align:center;">21</div>
<div class="t" style="font-size:8.2px;color:#2b3a4e;top:392.00px;font-weight:bold;left:1419.10px;width:300px;text-align:center;">Buyer Post/second</div>
<div class="t" style="font-size:8.5px;color:#2b3a4e;top:404.00px;left:1419.10px;width:300px;text-align:center;">0.37</div>
<div class="t" style="font-size:8.2px;color:#2b3a4e;top:392.00px;font-weight:bold;left:1628.30px;width:300px;text-align:center;">Timeouts Last 2 Hours</div>
<div class="t" style="font-size:8.5px;color:#2b3a4e;top:404.00px;left:1628.30px;width:300px;text-align:center;">0</div>
<div class="card" style="left:172.0px;top:434.0px;width:425.0px;height:71.0px;border-color:#cdcdcd"></div>
<div class="abs" style="left:182px;top:444px;width:405px;height:13px;background:#f4f5fa;border-bottom:1px solid #ebebf0"></div>
<div class="t" style="font-size:8.5px;color:#2b3a4e;top:446.00px;left:234.50px;width:300px;text-align:center;">Conversion Rate</div>
<div class="t" style="font-size:9px;color:#2b3a4e;top:461.00px;font-weight:bold;left:182.40px;letter-spacing:-0.355px;">66.67%</div>
<div class="t" style="font-size:8.5px;color:#2b3a4e;top:472.00px;left:182.40px;letter-spacing:-0.092px;">Prior Day: 44.44%(-33.34%)</div>
<div class="t" style="font-size:8.5px;color:#2b3a4e;top:484.00px;left:182.40px;letter-spacing:-0.077px;">Prior Week: 75.00%(+12.49%)</div>
<div class="card" style="left:172.0px;top:512.0px;width:1720.0px;height:72.0px;border-color:#a9a9a9"></div>
<div class="t" style="font-size:9.6px;color:#2b3a4e;top:524.07px;left:181.50px;text-rendering:geometricPrecision;letter-spacing:-0.004px;">SYSTEM ACTIVITY</div>
<svg class="abs" style="left:270.200px;top:524px" width="7" height="7" viewBox="0 0 11 11"><path d="M4.600 6.400a2.300 2.300 0 0 0 3.300 0l1.700-1.700a2.300 2.300 0 0 0-3.300-3.300l-.6.600M6.400 4.600a2.300 2.300 0 0 0-3.300 0L1.400 6.300a2.300 2.300 0 0 0 3.300 3.300l.6-.6" fill="none" stroke="#2272f5" stroke-width="1.3" stroke-linecap="round"/></svg>
<div class="t" style="font-size:6.7px;color:#2272f5;top:525.00px;left:279.50px;letter-spacing:0.017px;">MORE DETAILS</div>
<div class="abs" style="left:181px;top:538px;width:1701px;height:1px;background:#d2d2d2"></div>
<svg class="abs" style="left:1866.9px;top:519.5px" width="16" height="16" viewBox="0 0 16 16"><ellipse cx="8" cy="8.400" rx="7.100" ry="6.500" fill="#2d5439"/><rect x="3.900" y="3.900" width="8.100" height="7.100" rx="1.600" fill="#fbfdfb"/><path d="M5.500 6.900a2.600 2.400 0 0 1 4.600-1.100M10.400 8a2.600 2.400 0 0 1-4.600 1.100" fill="none" stroke="#2d5439" stroke-width="1.100"/><path d="M10.900 4.600v2h-2zM5 10.300v-2h2z" fill="#2d5439"/></svg>
<div class="t" style="font-size:8.3px;color:#2b3a4e;top:548.00px;font-weight:bold;left:234.40px;width:300px;text-align:center;">Today</div>
<div class="t" style="font-size:8.3px;color:#2b3a4e;top:548.00px;font-weight:bold;left:655.90px;width:300px;text-align:center;">Yesterday</div>
<div class="t" style="font-size:8.3px;color:#2b3a4e;top:548.00px;font-weight:bold;left:1086.00px;width:300px;text-align:center;">Last Week</div>
<div class="t" style="font-size:8.3px;color:#2b3a4e;top:548.00px;font-weight:bold;left:1518.90px;width:300px;text-align:center;">Last Month</div>
<div class="t" style="font-size:8.5px;color:#2b3a4e;top:561.00px;left:234.40px;width:300px;text-align:center;">0</div>
<div class="abs" style="left:594.7px;top:559px;width:421.9px;height:12.900px;background:#fd9550"></div>
<div class="t" style="font-size:8.5px;color:#2b3a4e;top:561.00px;left:655.65px;width:300px;text-align:center;text-decoration:underline;">2</div>
<div class="abs" style="left:1023.9px;top:559px;width:424.0px;height:12.900px;background:#6c757d"></div>
<div class="t" style="font-size:8.5px;color:#fff;top:561.00px;left:1085.90px;width:300px;text-align:center;text-decoration:underline;">6</div>
<div class="abs" style="left:1455.2px;top:559px;width:427.9px;height:12.900px;background:#6c757d"></div>
<div class="t" style="font-size:8.5px;color:#fff;top:561.00px;left:1519.15px;width:300px;text-align:center;text-decoration:underline;">7</div>
<div class="card" style="left:172.0px;top:591.0px;width:1720.0px;height:71.0px;border-color:#dedede"></div>
<div class="t" style="font-size:8.5px;color:#2b3a4e;top:622.00px;left:882.00px;width:300px;text-align:center;">Here to always help!</div>
<div class="card" style="left:172.0px;top:669.0px;width:1720.0px;height:150.0px;border-color:#a9a9a9"></div>
<div class="t" style="font-size:9.6px;color:#2b3a4e;top:676.17px;left:177.60px;text-rendering:geometricPrecision;letter-spacing:-0.102px;">PUBLISHER SUMMARY: GROUP BY DATE</div>
<div class="abs" style="left:177px;top:690px;width:1709px;height:1px;background:#d2d2d2"></div>
<svg class="abs" style="left:165px;top:690px" width="1734" height="137" viewBox="165 690 1734 137" font-family="Liberation Sans, sans-serif">
<path d="M208.600 781.47H1748.500" stroke="#ececec" stroke-width="1"/>
<path d="M208.600 767.73H1748.500" stroke="#ececec" stroke-width="1"/>
<path d="M208.600 754.00H1748.500" stroke="#ececec" stroke-width="1"/>
<path d="M208.600 740.26H1748.500" stroke="#ececec" stroke-width="1"/>
<path d="M208.600 726.53H1748.500" stroke="#ececec" stroke-width="1"/>
<path d="M208.600 712.79H1748.500" stroke="#ececec" stroke-width="1"/>
<path d="M208.600 699.06H1748.500" stroke="#ececec" stroke-width="1"/>
<path d="M411.0 699.300V801.800" stroke="#e6e6e6" stroke-width="1.100"/>
<path d="M602.0 699.300V801.800" stroke="#e6e6e6" stroke-width="1.100"/>
<path d="M793.0 699.300V801.800" stroke="#e6e6e6" stroke-width="1.100"/>
<path d="M984.0 699.300V801.800" stroke="#e6e6e6" stroke-width="1.100"/>
<path d="M1175.0 699.300V801.800" stroke="#e6e6e6" stroke-width="1.100"/>
<path d="M1366.0 699.300V801.800" stroke="#e6e6e6" stroke-width="1.100"/>
<path d="M1557.0 699.300V801.800" stroke="#e6e6e6" stroke-width="1.100"/>
<path d="M1748.5 699.300V801.800" stroke="#e6e6e6" stroke-width="1.100"/>
<path d="M208.600 795.20H1748.500" stroke="#b5b5b5" stroke-width="1"/>
<path d="M220 700V801.800" stroke="#b4b4b4" stroke-width="1.300"/>
<text x="200.5" y="798.4" font-size="9" fill="#6c6c6c" textLength="7.3" lengthAdjust="spacingAndGlyphs">0</text>
<text x="192.8" y="784.7" font-size="9" fill="#6c6c6c" textLength="15" lengthAdjust="spacingAndGlyphs">20</text>
<text x="192.8" y="770.9" font-size="9" fill="#6c6c6c" textLength="15" lengthAdjust="spacingAndGlyphs">40</text>
<text x="192.8" y="757.2" font-size="9" fill="#6c6c6c" textLength="15" lengthAdjust="spacingAndGlyphs">60</text>
<text x="192.8" y="743.5" font-size="9" fill="#6c6c6c" textLength="15" lengthAdjust="spacingAndGlyphs">80</text>
<text x="185.4" y="729.7" font-size="9" fill="#6c6c6c" textLength="22.4" lengthAdjust="spacingAndGlyphs">100</text>
<text x="185.4" y="716.0" font-size="9" fill="#6c6c6c" textLength="22.4" lengthAdjust="spacingAndGlyphs">120</text>
<text x="185.4" y="702.3" font-size="9" fill="#6c6c6c" textLength="22.4" lengthAdjust="spacingAndGlyphs">140</text>
<text x="184.6" y="809.800" font-size="9" fill="#6c6c6c" textLength="70.800" lengthAdjust="spacingAndGlyphs">06/21/2023</text>
<text x="375.6" y="809.800" font-size="9" fill="#6c6c6c" textLength="70.800" lengthAdjust="spacingAndGlyphs">06/22/2023</text>
<text x="566.6" y="809.800" font-size="9" fill="#6c6c6c" textLength="70.800" lengthAdjust="spacingAndGlyphs">06/23/2023</text>
<text x="757.6" y="809.800" font-size="9" fill="#6c6c6c" textLength="70.800" lengthAdjust="spacingAndGlyphs">06/24/2023</text>
<text x="948.6" y="809.800" font-size="9" fill="#6c6c6c" textLength="70.800" lengthAdjust="spacingAndGlyphs">06/25/2023</text>
<text x="1139.6" y="809.800" font-size="9" fill="#6c6c6c" textLength="70.800" lengthAdjust="spacingAndGlyphs">06/26/2023</text>
<text x="1330.6" y="809.800" font-size="9" fill="#6c6c6c" textLength="70.800" lengthAdjust="spacingAndGlyphs">06/27/2023</text>
<text x="1521.6" y="809.800" font-size="9" fill="#6c6c6c" textLength="70.800" lengthAdjust="spacingAndGlyphs">06/28/2023</text>
<text x="1713.1" y="809.800" font-size="9" fill="#6c6c6c" textLength="70.800" lengthAdjust="spacingAndGlyphs">06/29/2023</text>
<path d="M220.0 725.2C283.7 725.7 347.3 728.2 411.0 726.6C474.7 725.0 538.3 717.4 602.0 715.6C665.7 713.8 729.3 712.9 793.0 716.0C856.7 719.1 920.3 736.1 984.0 734.4C1047.7 732.6 1111.3 707.5 1175.0 705.5C1238.7 703.5 1302.3 722.0 1366.0 722.7C1429.7 723.5 1493.2 698.4 1557.0 710.0C1620.8 721.6 1684.7 774.4 1748.5 792.5" fill="none" stroke="#5fcfa7" stroke-width=".85" stroke-opacity=".85"/>
<path d="M220.0 725.0C283.7 725.5 347.3 728.0 411.0 726.4C474.7 724.8 538.3 717.2 602.0 715.4C665.7 713.6 729.3 712.7 793.0 715.8C856.7 718.9 920.3 736.1 984.0 734.2C1047.7 732.3 1111.3 706.7 1175.0 704.2C1238.7 701.7 1302.3 718.5 1366.0 719.3C1429.7 720.0 1493.2 696.5 1557.0 708.7C1620.8 720.9 1684.7 773.9 1748.5 792.3" fill="none" stroke="#8c6961" stroke-width=".85" stroke-opacity=".85"/>
<path d="M220.0 750.2C283.7 752.0 347.3 756.0 411.0 755.7C474.7 755.4 538.3 748.6 602.0 748.4C665.7 748.2 729.3 752.2 793.0 754.3C856.7 756.4 920.3 761.4 984.0 761.2C1047.7 761.0 1111.3 754.8 1175.0 753.3C1238.7 751.8 1302.3 753.5 1366.0 752.0C1429.7 750.5 1493.2 737.8 1557.0 744.6C1620.8 751.4 1684.7 782.4 1748.5 793.0" fill="none" stroke="#a8b2d0" stroke-width=".85" stroke-opacity=".85"/>
<path d="M220.0 770.4C283.7 769.0 347.3 767.5 411.0 766.2C474.7 764.9 538.3 764.1 602.0 762.6C665.7 761.1 729.3 756.2 793.0 757.1C856.7 758.0 920.3 769.7 984.0 768.1C1047.7 766.5 1111.3 747.7 1175.0 747.4C1238.7 747.1 1302.3 763.8 1366.0 766.1C1429.7 768.4 1493.2 756.7 1557.0 761.1C1620.8 765.5 1684.7 785.8 1748.5 792.8" fill="none" stroke="#f26a1b" stroke-width=".85" stroke-opacity=".85"/>
<ellipse cx="220.0" cy="725.2" rx="2.500" ry="1.750" fill="#5fcfa7" fill-opacity=".5" stroke="#5fcfa7" stroke-width=".8" stroke-opacity=".8"/>
<ellipse cx="411.0" cy="726.6" rx="2.500" ry="1.750" fill="#5fcfa7" fill-opacity=".5" stroke="#5fcfa7" stroke-width=".8" stroke-opacity=".8"/>
<ellipse cx="602.0" cy="715.6" rx="2.500" ry="1.750" fill="#5fcfa7" fill-opacity=".5" stroke="#5fcfa7" stroke-width=".8" stroke-opacity=".8"/>
<ellipse cx="793.0" cy="716.0" rx="2.500" ry="1.750" fill="#5fcfa7" fill-opacity=".5" stroke="#5fcfa7" stroke-width=".8" stroke-opacity=".8"/>
<ellipse cx="984.0" cy="734.4" rx="2.500" ry="1.750" fill="#5fcfa7" fill-opacity=".5" stroke="#5fcfa7" stroke-width=".8" stroke-opacity=".8"/>
<ellipse cx="1175.0" cy="705.5" rx="2.500" ry="1.750" fill="#5fcfa7" fill-opacity=".5" stroke="#5fcfa7" stroke-width=".8" stroke-opacity=".8"/>
<ellipse cx="1366.0" cy="722.7" rx="2.500" ry="1.750" fill="#5fcfa7" fill-opacity=".5" stroke="#5fcfa7" stroke-width=".8" stroke-opacity=".8"/>
<ellipse cx="1557.0" cy="710.0" rx="2.500" ry="1.750" fill="#5fcfa7" fill-opacity=".5" stroke="#5fcfa7" stroke-width=".8" stroke-opacity=".8"/>
<ellipse cx="1748.5" cy="792.5" rx="2.500" ry="1.750" fill="#5fcfa7" fill-opacity=".12" stroke="#5fcfa7" stroke-width=".8" stroke-opacity=".8"/>
<ellipse cx="220.0" cy="725.0" rx="2.500" ry="1.750" fill="#8c6961" fill-opacity=".5" stroke="#8c6961" stroke-width=".8" stroke-opacity=".8"/>
<ellipse cx="411.0" cy="726.4" rx="2.500" ry="1.750" fill="#8c6961" fill-opacity=".5" stroke="#8c6961" stroke-width=".8" stroke-opacity=".8"/>
<ellipse cx="602.0" cy="715.4" rx="2.500" ry="1.750" fill="#8c6961" fill-opacity=".5" stroke="#8c6961" stroke-width=".8" stroke-opacity=".8"/>
<ellipse cx="793.0" cy="715.8" rx="2.500" ry="1.750" fill="#8c6961" fill-opacity=".5" stroke="#8c6961" stroke-width=".8" stroke-opacity=".8"/>
<ellipse cx="984.0" cy="734.2" rx="2.500" ry="1.750" fill="#8c6961" fill-opacity=".5" stroke="#8c6961" stroke-width=".8" stroke-opacity=".8"/>
<ellipse cx="1175.0" cy="704.2" rx="2.500" ry="1.750" fill="#8c6961" fill-opacity=".5" stroke="#8c6961" stroke-width=".8" stroke-opacity=".8"/>
<ellipse cx="1366.0" cy="719.3" rx="2.500" ry="1.750" fill="#8c6961" fill-opacity=".5" stroke="#8c6961" stroke-width=".8" stroke-opacity=".8"/>
<ellipse cx="1557.0" cy="708.7" rx="2.500" ry="1.750" fill="#8c6961" fill-opacity=".5" stroke="#8c6961" stroke-width=".8" stroke-opacity=".8"/>
<ellipse cx="1748.5" cy="792.3" rx="2.500" ry="1.750" fill="#8c6961" fill-opacity=".12" stroke="#8c6961" stroke-width=".8" stroke-opacity=".8"/>
<ellipse cx="220.0" cy="750.2" rx="2.500" ry="1.750" fill="#a8b2d0" fill-opacity=".25" stroke="#a8b2d0" stroke-width=".8" stroke-opacity=".8"/>
<ellipse cx="411.0" cy="755.7" rx="2.500" ry="1.750" fill="#a8b2d0" fill-opacity=".25" stroke="#a8b2d0" stroke-width=".8" stroke-opacity=".8"/>
<ellipse cx="602.0" cy="748.4" rx="2.500" ry="1.750" fill="#a8b2d0" fill-opacity=".25" stroke="#a8b2d0" stroke-width=".8" stroke-opacity=".8"/>
<ellipse cx="793.0" cy="754.3" rx="2.500" ry="1.750" fill="#a8b2d0" fill-opacity=".25" stroke="#a8b2d0" stroke-width=".8" stroke-opacity=".8"/>
<ellipse cx="984.0" cy="761.2" rx="2.500" ry="1.750" fill="#a8b2d0" fill-opacity=".25" stroke="#a8b2d0" stroke-width=".8" stroke-opacity=".8"/>
<ellipse cx="1175.0" cy="753.3" rx="2.500" ry="1.750" fill="#a8b2d0" fill-opacity=".25" stroke="#a8b2d0" stroke-width=".8" stroke-opacity=".8"/>
<ellipse cx="1366.0" cy="752.0" rx="2.500" ry="1.750" fill="#a8b2d0" fill-opacity=".25" stroke="#a8b2d0" stroke-width=".8" stroke-opacity=".8"/>
<ellipse cx="1557.0" cy="744.6" rx="2.500" ry="1.750" fill="#a8b2d0" fill-opacity=".25" stroke="#a8b2d0" stroke-width=".8" stroke-opacity=".8"/>
<ellipse cx="1748.5" cy="793.0" rx="2.500" ry="1.750" fill="#a8b2d0" fill-opacity=".12" stroke="#a8b2d0" stroke-width=".8" stroke-opacity=".8"/>
<ellipse cx="220.0" cy="770.4" rx="2.500" ry="1.750" fill="#f26a1b" fill-opacity=".25" stroke="#f26a1b" stroke-width=".8" stroke-opacity=".8"/>
<ellipse cx="411.0" cy="766.2" rx="2.500" ry="1.750" fill="#f26a1b" fill-opacity=".25" stroke="#f26a1b" stroke-width=".8" stroke-opacity=".8"/>
<ellipse cx="602.0" cy="762.6" rx="2.500" ry="1.750" fill="#f26a1b" fill-opacity=".25" stroke="#f26a1b" stroke-width=".8" stroke-opacity=".8"/>
<ellipse cx="793.0" cy="757.1" rx="2.500" ry="1.750" fill="#f26a1b" fill-opacity=".25" stroke="#f26a1b" stroke-width=".8" stroke-opacity=".8"/>
<ellipse cx="984.0" cy="768.1" rx="2.500" ry="1.750" fill="#f26a1b" fill-opacity=".25" stroke="#f26a1b" stroke-width=".8" stroke-opacity=".8"/>
<ellipse cx="1175.0" cy="747.4" rx="2.500" ry="1.750" fill="#f26a1b" fill-opacity=".25" stroke="#f26a1b" stroke-width=".8" stroke-opacity=".8"/>
<ellipse cx="1366.0" cy="766.1" rx="2.500" ry="1.750" fill="#f26a1b" fill-opacity=".25" stroke="#f26a1b" stroke-width=".8" stroke-opacity=".8"/>
<ellipse cx="1557.0" cy="761.1" rx="2.500" ry="1.750" fill="#f26a1b" fill-opacity=".25" stroke="#f26a1b" stroke-width=".8" stroke-opacity=".8"/>
<ellipse cx="1748.5" cy="792.8" rx="2.500" ry="1.750" fill="#f26a1b" fill-opacity=".12" stroke="#f26a1b" stroke-width=".8" stroke-opacity=".8"/>
<rect x="1787.400" y="697.9" width="17.500" height="10" fill="#fff" stroke="#e4e4e4" stroke-width="1"/>
<rect x="1788.200" y="698.7" width="15.900" height="8.400" fill="#8c6961"/>
<text x="1810" y="706.0" font-size="10.500" fill="#3f4f63" textLength="27.2" lengthAdjust="spacingAndGlyphs">Call</text>
<rect x="1787.400" y="712.5" width="17.500" height="10" fill="#fff" stroke="#e4e4e4" stroke-width="1"/>
<rect x="1788.200" y="713.3" width="15.900" height="8.400" fill="#62cfa8"/>
<text x="1810" y="720.6" font-size="10.500" fill="#3f4f63" textLength="35.2" lengthAdjust="spacingAndGlyphs">Lead</text>
<rect x="1787.400" y="727.0" width="17.500" height="10" fill="#fff" stroke="#e4e4e4" stroke-width="1"/>
<rect x="1788.200" y="727.8" width="15.900" height="8.400" fill="#a1abc8"/>
<text x="1810" y="735.1" font-size="10.500" fill="#3f4f63" textLength="31.5" lengthAdjust="spacingAndGlyphs">Sold</text>
<rect x="1787.400" y="741.6" width="17.500" height="10" fill="#fff" stroke="#e4e4e4" stroke-width="1"/>
<rect x="1788.200" y="742.4" width="15.900" height="8.400" fill="#f4640f"/>
<text x="1810" y="749.7" font-size="10.500" fill="#3f4f63" textLength="45.2" lengthAdjust="spacingAndGlyphs">Reject</text>
<rect x="1787.400" y="756.1" width="17.500" height="10" fill="#fff" stroke="#e4e4e4" stroke-width="1"/>
<text x="1810" y="764.2" font-size="10.500" fill="#3f4f63" textLength="44.3" lengthAdjust="spacingAndGlyphs">Pub, $</text>
<rect x="1787.400" y="770.7" width="17.500" height="10" fill="#fff" stroke="#e4e4e4" stroke-width="1"/>
<text x="1810" y="778.8" font-size="10.500" fill="#3f4f63" textLength="44.3" lengthAdjust="spacingAndGlyphs">TTL, $</text>
<rect x="1787.400" y="785.3" width="17.500" height="10" fill="#fff" stroke="#e4e4e4" stroke-width="1"/>
<text x="1810" y="793.4" font-size="10.500" fill="#3f4f63" textLength="52" lengthAdjust="spacingAndGlyphs">ADM, $</text>
<rect x="1787.400" y="799.8" width="17.500" height="10" fill="#fff" stroke="#e4e4e4" stroke-width="1"/>
<text x="1810" y="807.9" font-size="10.500" fill="#3f4f63" textLength="44.3" lengthAdjust="spacingAndGlyphs">EPL, $</text>
</svg>
<div class="card" style="left:172.0px;top:826.0px;width:856.0px;height:80.0px;border-color:#a9a9a9"></div>
<div class="card" style="left:1035.0px;top:826.0px;width:857.0px;height:80.0px;border-color:#a9a9a9"></div>
<!-- description popup -->
<div class="abs" style="left:1720.200px;top:121.200px;width:159.800px;height:39.500px;background:#3b5574;box-shadow:0 3px 16px rgba(0,0,0,.38)"></div>
<svg class="abs" style="left:1743px;top:130.900px" width="21" height="21" viewBox="0 0 21 21"><circle cx="10.500" cy="10.500" r="10.300" fill="#fff"/><path d="M10.500 5.500v10M5.500 10.500h10" stroke="#4d6585" stroke-width="1"/><path d="M10.500 4.300l1.800 2.300h-3.600zM10.500 16.700l1.800-2.300h-3.600zM4.300 10.500l2.300-1.800v3.600zM16.700 10.500l-2.300-1.800v3.600z" fill="#4d6585"/></svg>
<div class="t" style="font-size:10.8px;color:#fff;top:135.00px;-webkit-text-stroke:0.35px;left:1775.30px;transform:scaleX(1.0900);transform-origin:0 0;letter-spacing:0.711px;">Description</div>
<svg class="abs" style="left:1852px;top:138.200px" width="7" height="6" viewBox="0 0 7 6"><path d="M3.500 0L7 6H0z" fill="#fff"/></svg>
</body>
</html>
